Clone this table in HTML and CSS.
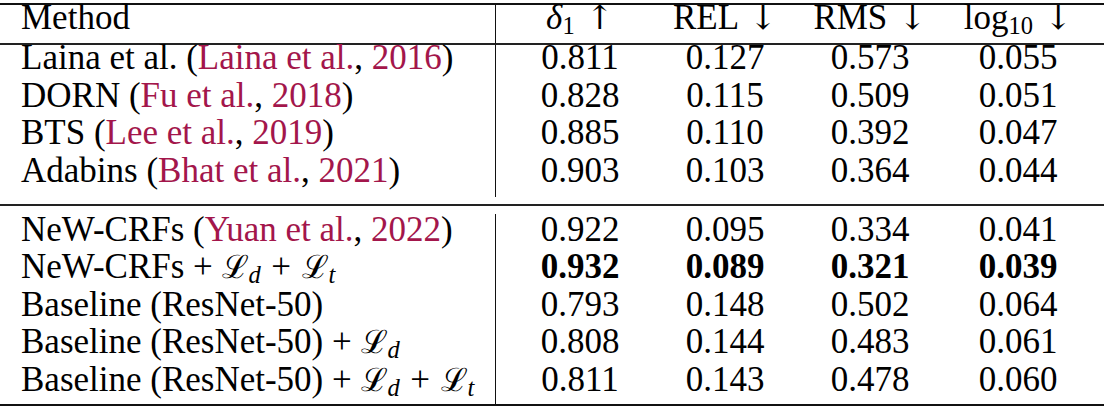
FILE: index.html
```html
<!DOCTYPE html>
<html lang="en">
<head>
  <meta charset="UTF-8">
  <title>Depth estimation results</title>
  <link rel="stylesheet" href="styles.css">
</head>
<body>

  <table class="results">
    <colgroup>
      <col class="col-method">
      <col class="col-d1">
      <col class="col-rel">
      <col class="col-rms">
      <col class="col-log">
    </colgroup>
    <thead>
      <tr>
        <th class="method">Method</th>
        <th><i>δ</i><span class="sub">1</span> <span class="arrow">↑</span></th>
        <th>REL <span class="arrow">↓</span></th>
        <th>RMS <span class="arrow">↓</span></th>
        <th class="last">log<span class="sub">10</span> <span class="arrow">↓</span></th>
      </tr>
    </thead>
    <tbody>
      <tr>
        <td class="method">Laina et al. (<span class="cite">Laina et al.</span>, <span class="cite">2016</span>)</td>
        <td>0.811</td><td>0.127</td><td>0.573</td><td class="last">0.055</td>
      </tr>
      <tr>
        <td class="method">DORN (<span class="cite">Fu et al.</span>, <span class="cite">2018</span>)</td>
        <td>0.828</td><td>0.115</td><td>0.509</td><td class="last">0.051</td>
      </tr>
      <tr>
        <td class="method">BTS (<span class="cite">Lee et al.</span>, <span class="cite">2019</span>)</td>
        <td>0.885</td><td>0.110</td><td>0.392</td><td class="last">0.047</td>
      </tr>
      <tr class="end-group">
        <td class="method">Adabins (<span class="cite">Bhat et al.</span>, <span class="cite">2021</span>)</td>
        <td>0.903</td><td>0.103</td><td>0.364</td><td class="last">0.044</td>
      </tr>
      <tr class="sep">
        <td colspan="5"><div class="midrule"></div></td>
      </tr>
      <tr class="start-group">
        <td class="method">NeW-CRFs (<span class="cite">Yuan et al.</span>, <span class="cite">2022</span>)</td>
        <td>0.922</td><td>0.095</td><td>0.334</td><td class="last">0.041</td>
      </tr>
      <tr class="best">
        <td class="method">NeW-CRFs + <span class="math"><span class="cal">ℒ</span><i class="sub">d</i><span class="op">+</span><span class="cal">ℒ</span><i class="sub">t</i></span></td>
        <td>0.932</td><td>0.089</td><td>0.321</td><td class="last">0.039</td>
      </tr>
      <tr>
        <td class="method">Baseline (ResNet-50)</td>
        <td>0.793</td><td>0.148</td><td>0.502</td><td class="last">0.064</td>
      </tr>
      <tr>
        <td class="method">Baseline (ResNet-50) + <span class="math"><span class="cal">ℒ</span><i class="sub">d</i></span></td>
        <td>0.808</td><td>0.144</td><td>0.483</td><td class="last">0.061</td>
      </tr>
      <tr class="bottom">
        <td class="method">Baseline (ResNet-50) + <span class="math"><span class="cal">ℒ</span><i class="sub">d</i><span class="op">+</span><span class="cal">ℒ</span><i class="sub">t</i></span></td>
        <td>0.811</td><td>0.143</td><td>0.478</td><td class="last">0.060</td>
      </tr>
    </tbody>
  </table>

</body>
</html>
```

FILE: styles.css
```css
body {
  margin: 0;
  background-color: #ffffff;
  color: #000000;
  font-family: "Liberation Serif", "Times New Roman", serif;
  font-size: 35px;
}
.results {
  width: 1104px;
  margin-top: 3px;
  table-layout: fixed;
  border-collapse: separate;
  border-spacing: 0;
}
.col-method { width: 496px; }
.col-d1 { width: 168px; }
.col-rel { width: 122px; }
.col-rms { width: 168px; }
.col-log { width: 150px; }

.results th,
.results td {
  padding: 0 0 11.5px;
  line-height: 26px;
  font-weight: normal;
  text-align: center;
  vertical-align: top;
  white-space: nowrap;
}
.results th {
  padding-bottom: 12px;
  border-top: 2px solid #111111;
  border-bottom: 2px solid #222222;
}
.results .method {
  text-align: left;
  padding-left: 21px;
  border-right: 1px solid #111111;
}
.results .last {
  padding-right: 22px;
}
.results .end-group td {
  padding-bottom: 13.5px;
}
.results .start-group td {
  padding-top: 3px;
}
.results .sep td {
  padding: 0;
  line-height: 0;
  border-right: none;
}
.midrule {
  margin: 7px 0 7.5px;
  border-top: 2px solid #222222;
}
.results .bottom td {
  border-bottom: 2px solid #111111;
}
.results .best td {
  font-weight: bold;
}
.results .best td.method {
  font-weight: normal;
}

.cite {
  color: #a3164b;
}
.sub {
  font-size: 0.7em;
  line-height: 0;
  vertical-align: -0.2em;
}
.arrow {
  margin-left: 0.08em;
  font-family: "DejaVu Serif", "Liberation Serif", serif;
  font-size: 0.95em;
}
.math .cal {
  font-family: "DejaVu Serif", serif;
  font-size: 0.92em;
  line-height: 0;
}
.math .op {
  margin: 0 0.3em;
}
```
